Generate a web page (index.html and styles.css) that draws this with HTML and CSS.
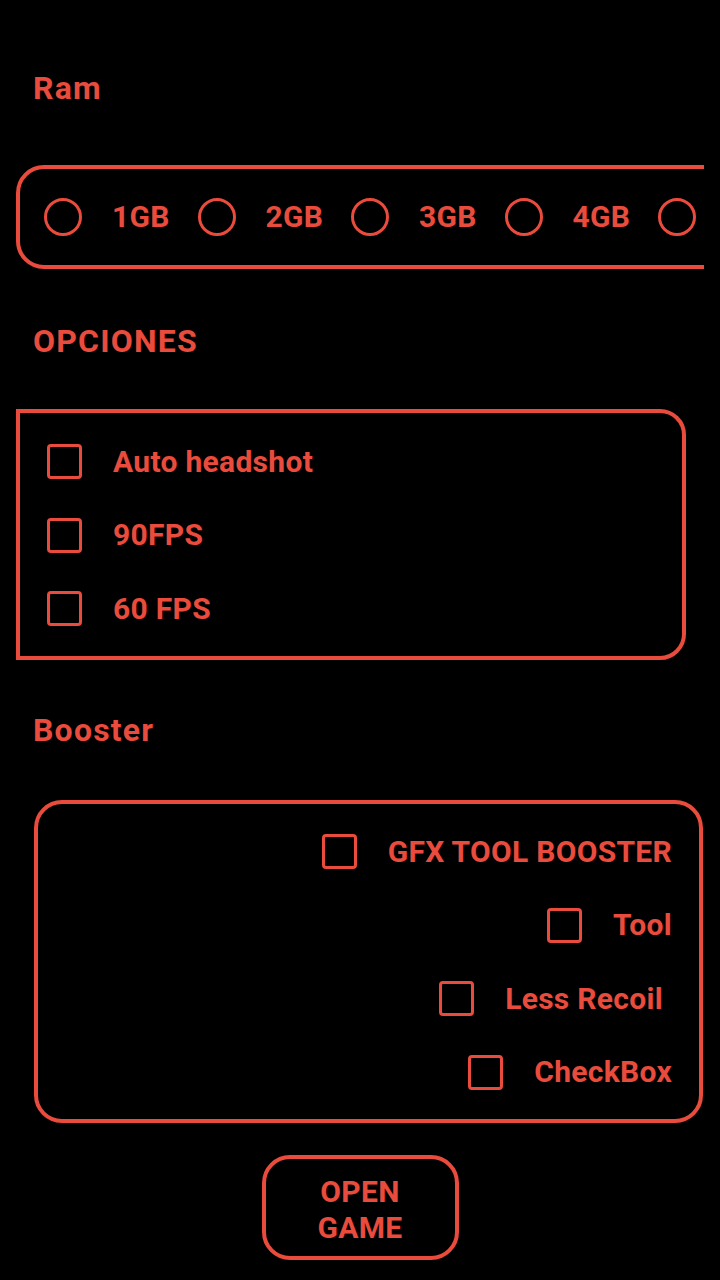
FILE: index.html
```html
<!DOCTYPE html>
<html>
<head>
<meta charset="utf-8">
<link rel="stylesheet" href="styles.css">
</head>
<body>
<div class="screen">
  <div class="title title-ram">Ram</div>
  <div class="ram-clip">
    <div class="ram-box">
      <div class="radio-item"><span class="radio"></span><span class="label">1GB</span></div>
      <div class="radio-item"><span class="radio"></span><span class="label">2GB</span></div>
      <div class="radio-item"><span class="radio"></span><span class="label">3GB</span></div>
      <div class="radio-item"><span class="radio"></span><span class="label">4GB</span></div>
      <div class="radio-item"><span class="radio"></span></div>
    </div>
  </div>

  <div class="title title-opc">OPCIONES</div>
  <div class="opc-box">
    <div class="check-row"><span class="check"></span><span class="label">Auto headshot</span></div>
    <div class="check-row"><span class="check"></span><span class="label">90FPS</span></div>
    <div class="check-row"><span class="check"></span><span class="label">60 FPS</span></div>
  </div>

  <div class="title title-boost">Booster</div>
  <div class="boost-box">
    <div class="check-row end"><span class="check"></span><span class="label">GFX TOOL BOOSTER</span></div>
    <div class="check-row end"><span class="check"></span><span class="label">Tool</span></div>
    <div class="check-row end shift"><span class="check"></span><span class="label">Less Recoil</span></div>
    <div class="check-row end"><span class="check"></span><span class="label">CheckBox</span></div>
  </div>

  <div class="btn-wrap">
    <div class="open-btn">OPEN<br>GAME</div>
  </div>
</div>
</body>
</html>
```
FILE: styles.css
```css
html, body {
  margin: 0;
  padding: 0;
  background: #000;
}
body {
  width: 720px;
  height: 1280px;
  overflow: hidden;
  font-family: Roboto, "Liberation Sans", sans-serif;
  font-weight: 700;
  font-size: 30px;
  letter-spacing: 0.3px;
  line-height: 34px;
  color: #e94b3c;
}
.screen {
  display: flex;
  flex-direction: column;
}
.title {
  padding-left: 33px;
  height: 34px;
  font-size: 32px;
  letter-spacing: 1.2px;
}
.title-ram { margin-top: 71px; }
.title-opc { margin-top: 55px; }
.title-boost { margin-top: 53px; }

.ram-clip {
  margin: 60px 16px 0 16px;
  overflow: hidden;
  height: 104px;
}
.ram-box {
  box-sizing: border-box;
  width: 900px;
  height: 104px;
  border: 4px solid #e94b3c;
  border-radius: 28px;
  display: flex;
  align-items: center;
  padding-left: 24px;
}
.radio-item {
  flex: 0 0 153.5px;
  display: flex;
  align-items: center;
}
.radio {
  box-sizing: border-box;
  width: 38px;
  height: 38px;
  border: 3px solid #e94b3c;
  border-radius: 50%;
  margin-right: 30px;
  flex: none;
}

.opc-box {
  box-sizing: border-box;
  margin: 51px 0 0 16px;
  width: 670px;
  height: 251px;
  border: 4px solid #e94b3c;
  border-radius: 0 26px 26px 0;
  padding: 12px 0 10px 27px;
  display: flex;
  flex-direction: column;
}
.check-row {
  height: 73.5px;
  display: flex;
  align-items: center;
}
.check {
  box-sizing: border-box;
  width: 35px;
  height: 35px;
  border: 3px solid #e94b3c;
  border-radius: 4px;
  margin-right: 31px;
  flex: none;
}

.boost-box {
  box-sizing: border-box;
  margin: 53px 17px 0 34px;
  height: 323px;
  border: 4px solid #e94b3c;
  border-radius: 28px;
  padding: 11px 27px 9px 0;
  display: flex;
  flex-direction: column;
}
.check-row.end {
  justify-content: flex-end;
}
.check-row.shift {
  margin-right: 9px;
}

.btn-wrap {
  display: flex;
  justify-content: center;
  margin-top: 32px;
}
.open-btn {
  box-sizing: border-box;
  width: 197px;
  height: 105px;
  border: 4px solid #e94b3c;
  border-radius: 28px;
  padding-top: 4px;
  display: flex;
  align-items: center;
  justify-content: center;
  text-align: center;
  line-height: 36px;
}
```
